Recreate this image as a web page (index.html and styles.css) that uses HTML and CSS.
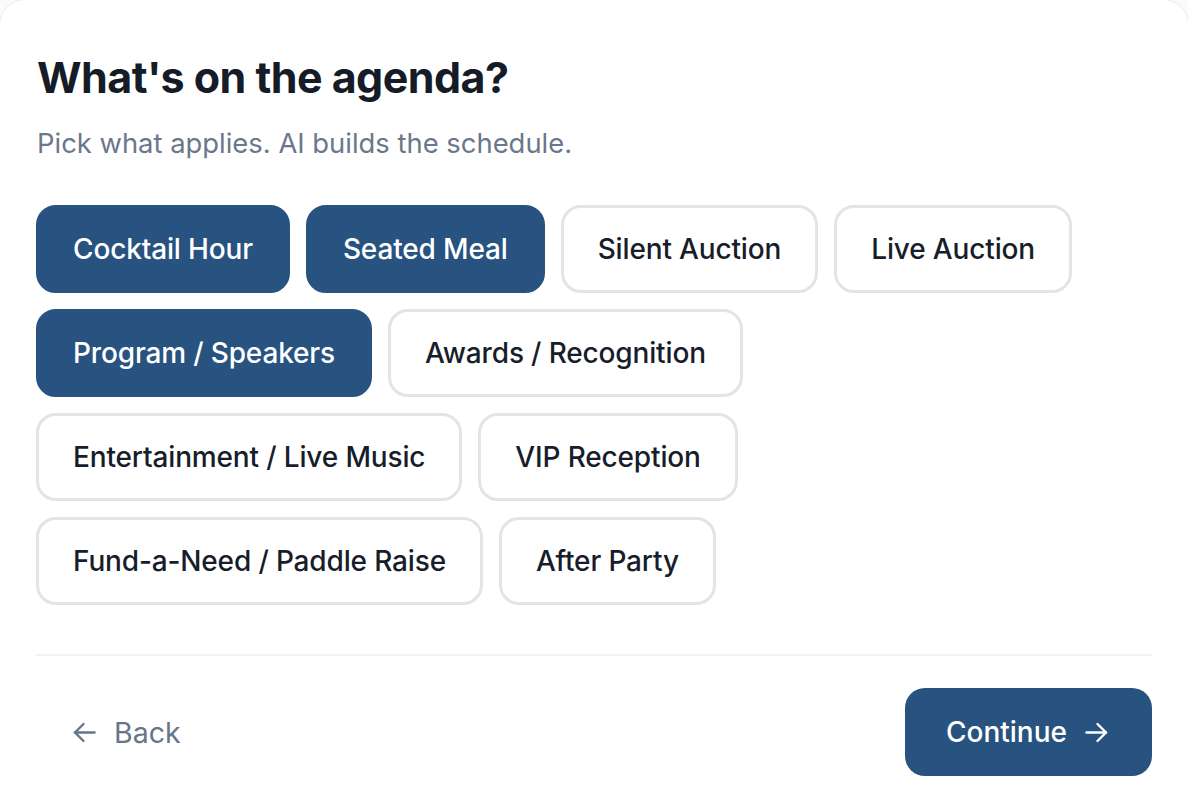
FILE: index.html
```html
<!DOCTYPE html>
<html lang="en">
<head>
	<meta charset="UTF-8">
	<title>Agenda</title>
	<link rel="stylesheet" href="styles.css">
</head>
<body>
	<div class="card">
		<h1 class="title">What's on the agenda?</h1>
		<p class="subtitle">Pick what applies. AI builds the schedule.</p>

		<div class="chips">
			<button class="chip active">Cocktail Hour</button>
			<button class="chip active">Seated Meal</button>
			<button class="chip">Silent Auction</button>
			<button class="chip">Live Auction</button>
			<button class="chip active">Program / Speakers</button>
			<button class="chip">Awards / Recognition</button>
			<button class="chip">Entertainment / Live Music</button>
			<button class="chip">VIP Reception</button>
			<button class="chip">Fund-a-Need / Paddle Raise</button>
			<button class="chip">After Party</button>
		</div>

		<div class="footer">
			<button class="back">
				<svg width="23" height="21" viewBox="0 0 23 21" fill="none" stroke="currentColor" stroke-width="2.4" stroke-linecap="round" stroke-linejoin="round"><path d="M21.5 10.5H2"/><path d="M10.5 2L2 10.5 10.5 19"/></svg>
				Back
			</button>
			<button class="next">
				Continue
				<svg width="23" height="21" viewBox="0 0 23 21" fill="none" stroke="currentColor" stroke-width="2.4" stroke-linecap="round" stroke-linejoin="round"><path d="M1.5 10.5H21"/><path d="M12.5 2L21 10.5 12.5 19"/></svg>
			</button>
		</div>
	</div>
</body>
</html>
```

FILE: styles.css
```css
* {
	margin: 0;
	padding: 0;
	box-sizing: border-box;
}
body {
	background: #fbfbfc;
	font-family: Inter, "Noto Sans", sans-serif;
	overflow: hidden;
}
.card {
	width: 1190px;
	height: 809px;
	margin: -1px 0 0 -1px;
	background: #fff;
	border: 1px solid #eceef2;
	border-bottom: none;
	border-radius: 26px 26px 0 0;
	padding: 51px 36px 0 36px;
}
.title {
	font-size: 43px;
	line-height: 52px;
	font-weight: 700;
	color: #151b27;
	letter-spacing: -0.55px;
	padding-left: 1px;
}
.subtitle {
	margin-top: 23px;
	font-size: 27.4px;
	line-height: 34px;
	color: #6b778b;
	padding-left: 1px;
}
.chips {
	margin-top: 45px;
	display: flex;
	flex-wrap: wrap;
	gap: 16px;
	padding-right: 70px;
}
.chip {
	height: 88px;
	padding: 0 34px;
	border: 3px solid #e2e4ea;
	border-radius: 20px;
	background: #fff;
	color: #171d2a;
	font: 500 28px Inter, "Noto Sans", sans-serif;
	letter-spacing: -0.15px;
	cursor: pointer;
}
.chip.active {
	background: #285381;
	border-color: #285381;
	color: #fff;
}
.footer {
	margin-top: 49px;
	border-top: 2px solid #f1f2f4;
	padding-top: 32px;
	display: flex;
	justify-content: space-between;
	align-items: center;
}
.back {
	display: flex;
	align-items: center;
	gap: 18px;
	padding-left: 37px;
	border: none;
	background: none;
	color: #67758a;
	font: 400 28.5px Inter, "Noto Sans", sans-serif;
}
.next {
	display: flex;
	align-items: center;
	gap: 18px;
	height: 88px;
	padding: 0 44px 0 41px;
	border: none;
	border-radius: 20px;
	background: #285381;
	color: #fff;
	font: 500 28px Inter, "Noto Sans", sans-serif;
}
```
